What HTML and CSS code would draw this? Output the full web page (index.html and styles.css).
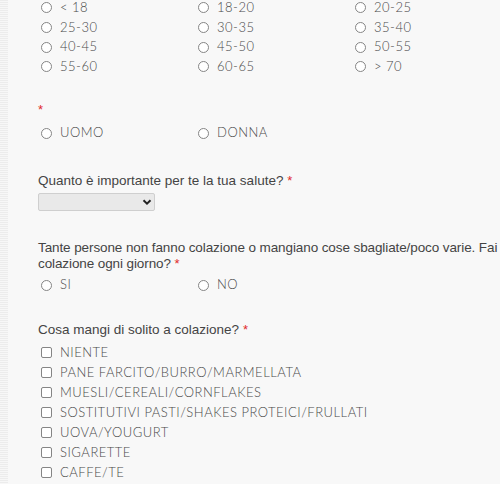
FILE: index.html
```html
<!DOCTYPE html>
<html lang="it">
<head>
    <meta charset="UTF-8">
    <meta name="viewport" content="width=device-width, initial-scale=1.0">
    <title>Questionario</title>
    <link rel="stylesheet" href="styles.css">
</head>
<body>
    <div class="page">
        <div class="edge"></div>
        <form class="form">
            <div class="question q-age">
                <div class="options cols-3">
                    <label class="option"><span class="radio"></span>&lt; 18</label>
                    <label class="option"><span class="radio"></span>18-20</label>
                    <label class="option"><span class="radio"></span>20-25</label>
                    <label class="option"><span class="radio"></span>25-30</label>
                    <label class="option"><span class="radio"></span>30-35</label>
                    <label class="option"><span class="radio"></span>35-40</label>
                    <label class="option"><span class="radio"></span>40-45</label>
                    <label class="option"><span class="radio"></span>45-50</label>
                    <label class="option"><span class="radio"></span>50-55</label>
                    <label class="option"><span class="radio"></span>55-60</label>
                    <label class="option"><span class="radio"></span>60-65</label>
                    <label class="option"><span class="radio"></span>&gt; 70</label>
                </div>
            </div>

            <div class="question q-sex">
                <div class="label"><span class="req">*</span></div>
                <div class="options cols-3">
                    <label class="option"><span class="radio"></span>UOMO</label>
                    <label class="option"><span class="radio"></span>DONNA</label>
                </div>
            </div>

            <div class="question q-health">
                <div class="label">Quanto è importante per te la tua salute? <span class="req">*</span></div>
                <div class="select">
                    <svg width="10" height="8" viewBox="0 0 10 8"><path d="M1.5 2.2 L5 5.6 L8.5 2.2" fill="none" stroke="#222" stroke-width="2"/></svg>
                </div>
            </div>

            <div class="question q-breakfast">
                <div class="label">Tante persone non fanno colazione o mangiano cose sbagliate/poco varie. Fai colazione ogni giorno? <span class="req">*</span></div>
                <div class="options cols-3">
                    <label class="option"><span class="radio"></span>SI</label>
                    <label class="option"><span class="radio"></span>NO</label>
                </div>
            </div>

            <div class="question q-food">
                <div class="label">Cosa mangi di solito a colazione? <span class="req">*</span></div>
                <div class="options checks">
                    <label class="option"><span class="check"></span>NIENTE</label>
                    <label class="option"><span class="check"></span>PANE FARCITO/BURRO/MARMELLATA</label>
                    <label class="option"><span class="check"></span>MUESLI/CEREALI/CORNFLAKES</label>
                    <label class="option"><span class="check"></span>SOSTITUTIVI PASTI/SHAKES PROTEICI/FRULLATI</label>
                    <label class="option"><span class="check"></span>UOVA/YOUGURT</label>
                    <label class="option"><span class="check"></span>SIGARETTE</label>
                    <label class="option"><span class="check"></span>CAFFE/TE</label>
                </div>
            </div>
        </form>
    </div>
</body>
</html>
```

FILE: styles.css
```css
html, body {
    margin: 0;
    padding: 0;
    overflow: hidden;
    background-color: #f8f8f8;
}
.page {
    display: flex;
    width: 580px;
    min-height: 484px;
}
.edge {
    width: 8px;
    flex-shrink: 0;
    background-color: #f1f1f1;
    background-image: repeating-linear-gradient(0deg, #f7f7f7 0 1px, #ececec 1px 2px);
}
.form {
    width: 500px;
    padding-left: 30px;
    margin-top: -3px;
}
.question {
    margin-top: 28px;
}
.question.q-age {
    margin-top: 0;
}
.question.q-sex {
    margin-top: 26px;
}
.question.q-health {
    margin-top: 31px;
}
.question.q-breakfast {
    margin-top: 29px;
}
.question.q-breakfast .label {
    margin-bottom: 3px;
    letter-spacing: -0.1px;
}
.question.q-food {
    margin-top: 28px;
}
.question.q-food .label {
    margin-bottom: 4px;
}
.label {
    font-family: "Liberation Sans", Arial, sans-serif;
    font-size: 13.5px;
    line-height: 15.5px;
    color: #444;
    margin-bottom: 5px;
}
.req {
    color: #e02a2a;
    font-size: 13px;
}
.options {
    display: grid;
    grid-auto-rows: 19.7px;
}
.cols-3 {
    grid-template-columns: 157px 157px 157px;
}
.checks {
    grid-auto-rows: 20px;
}
.option {
    display: flex;
    align-items: center;
    gap: 8px;
    font-family: Lato, "Open Sans", sans-serif;
    font-size: 13px;
    font-weight: 300;
    letter-spacing: 0.5px;
    color: #4a4a4a;
    white-space: nowrap;
}
.radio {
    width: 9px;
    height: 9px;
    border: 1px solid #858585;
    border-radius: 50%;
    margin-left: 3px;
    margin-top: 2px;
    background-color: #fff;
}
.check {
    width: 9px;
    height: 9px;
    border: 1px solid #858585;
    border-radius: 2px;
    margin-left: 3px;
    margin-top: 1px;
    background-color: #fff;
}
.select {
    width: 113px;
    height: 16px;
    border: 1px solid #cfcfcf;
    border-radius: 2px;
    background-color: #e9e9e9;
    display: flex;
    justify-content: flex-end;
    align-items: center;
    padding-right: 2px;
}
```
